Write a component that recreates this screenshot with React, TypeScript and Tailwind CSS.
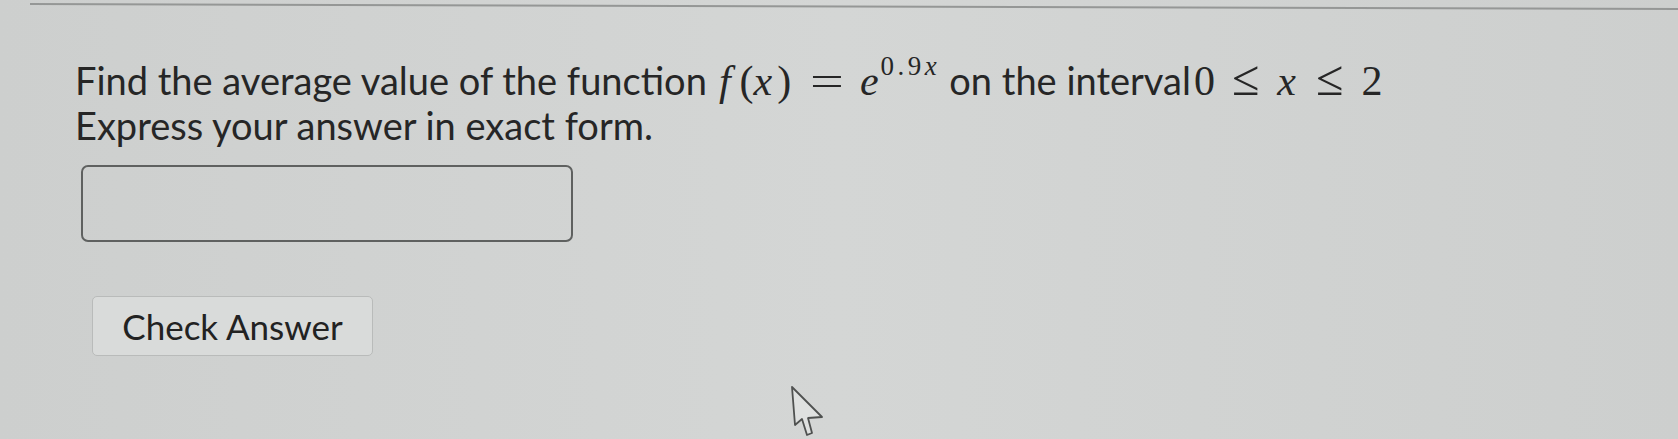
const serif = { fontFamily: "'Liberation Serif', 'DejaVu Serif', serif" };

export default function App() {
  return (
    <div className="relative h-[439px] w-full overflow-hidden bg-gradient-to-r from-[#cdcfce] via-[#d4d6d5] to-[#cdcfce] text-[#262626]">
      <div className="ml-[30px] mt-[3px] h-[2px] origin-left rotate-[0.17deg] bg-[#959796]" />
      <div className="pl-[75px] pt-[50px]" style={{ fontFamily: "Lato, 'Open Sans', sans-serif" }}>
        <p className="flex h-[47px] items-baseline whitespace-nowrap text-[38px] leading-[47px]">
          <span>Find the average value of the function</span>
          <span className="ml-[12px] flex items-baseline text-[42px]" style={serif}>
            <i>f</i>
            <span className="ml-[9px]">(</span>
            <i>x</i>
            <span className="ml-[5px]">)</span>
            <span className="ml-[24px] inline-block scale-x-[1.43]">=</span>
            <i className="ml-[21px]">e</i>
            <span className="relative -top-[20px] ml-[2px] text-[27px] tracking-[3.5px]">
              0.9<i>x</i>
            </span>
          </span>
          <span className="ml-[9px]">on the interval</span>
          <span className="ml-[3px] flex items-baseline text-[42px] leading-[47px]" style={serif}>
            <span>0</span>
            <span className="ml-[17px] text-[50px]">≤</span>
            <i className="ml-[18px]">x</i>
            <span className="ml-[20px] text-[50px]">≤</span>
            <span className="ml-[18px]">2</span>
          </span>
        </p>
        <p className="text-[38px] leading-[47px]">Express your answer in exact form.</p>
        <div className="ml-[6px] mt-[16px] h-[77px] w-[492px] rounded-[7px] border-2 border-[#5f6160]" />
        <button className="ml-[17px] mt-[54px] flex h-[60px] w-[281px] items-center justify-center rounded-[5px] border border-[#b9bbba] bg-[#d9dbda] text-[35px] text-[#222]">
          Check Answer
        </button>
      </div>
      <svg className="absolute left-[790px] top-[385px]" width="36" height="54" viewBox="-2 -2 36 54">
        <path d="M0 0 L3 38 L10 32 L15 48 L20 46 L16 31 L30 30 Z" fill="#dfe1e0" stroke="#4f5150" strokeWidth="1.8" strokeLinejoin="round" />
      </svg>
    </div>
  );
}
